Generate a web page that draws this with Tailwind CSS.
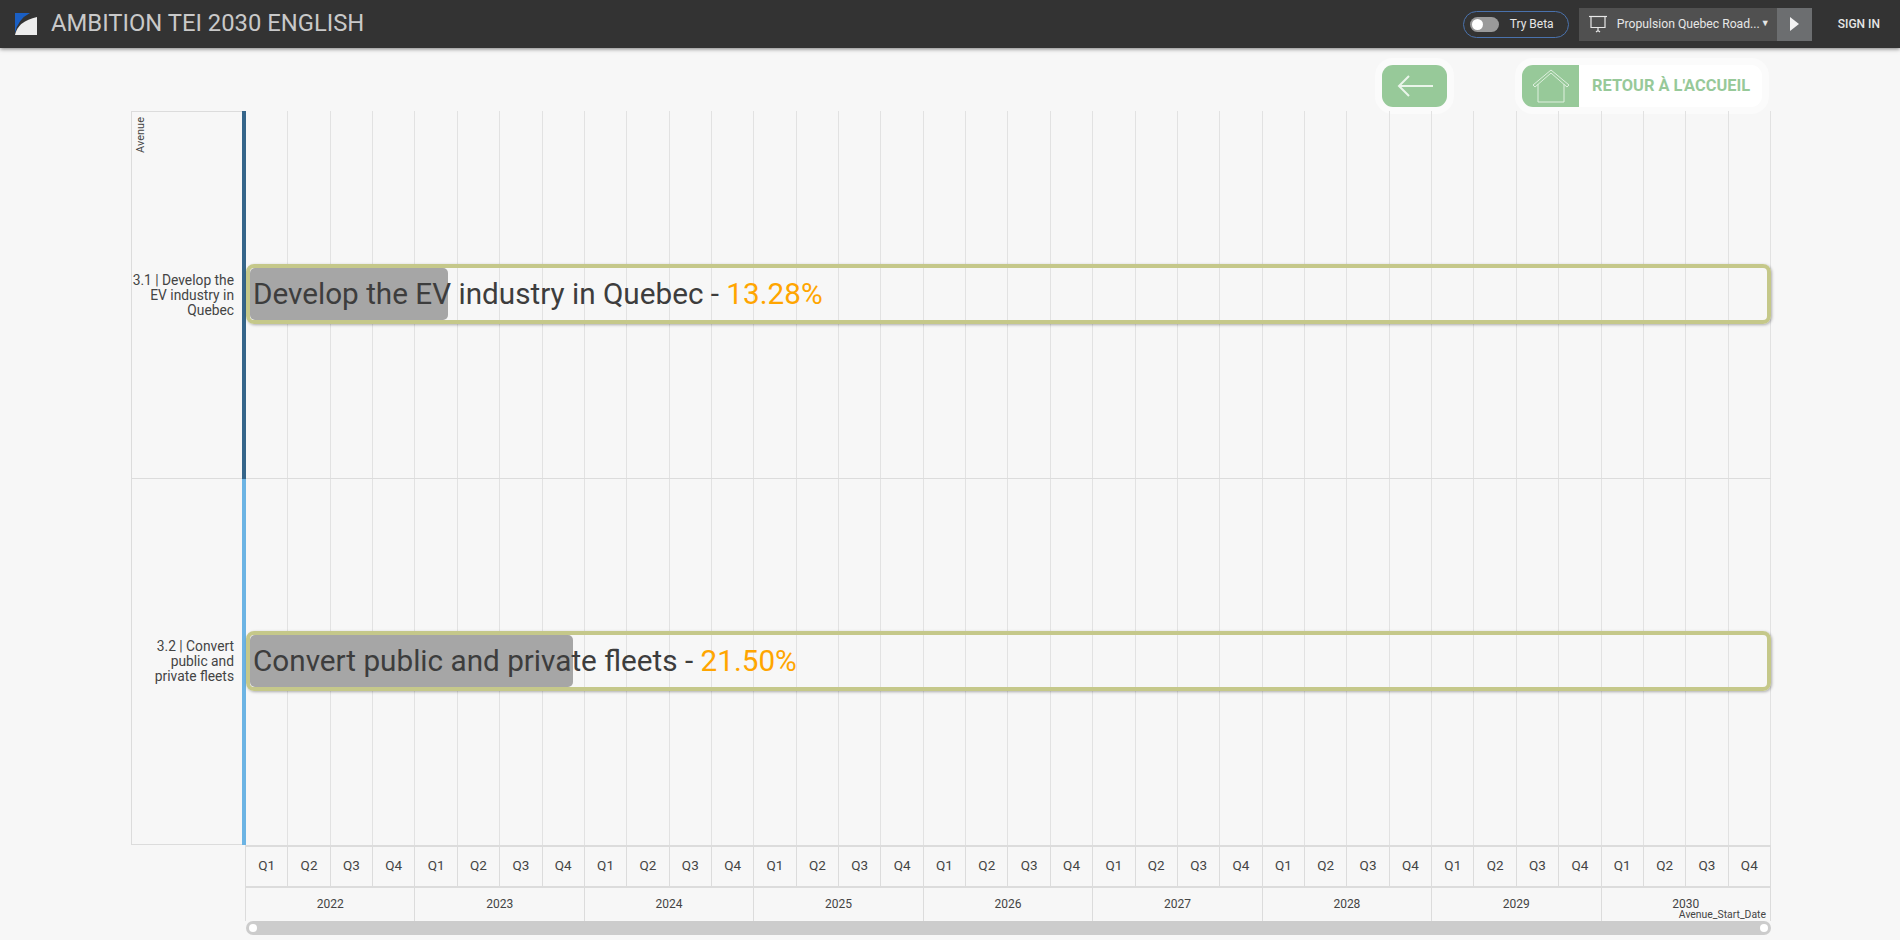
<!DOCTYPE html>
<html lang="en">

<head>
    <meta charset="UTF-8">
    <meta name="viewport" content="width=device-width, initial-scale=1.0">
    <title>AMBITION TEI 2030 ENGLISH</title>
    <script src="https://cdn.jsdelivr.net/npm/@tailwindcss/browser@4"></script>
</head>

<body class="h-screen overflow-hidden bg-[#f7f7f7] font-['Roboto',sans-serif] text-[#444]">

    <!-- Top bar -->
    <header class="relative z-10 flex h-12 items-center bg-[#333333] shadow-[0_1px_4px_rgba(0,0,0,0.5)]">
        <svg class="ml-[15px] h-[22px] w-[22px]" viewBox="0 0 22 22">
            <path d="M0 22Q3 8 22 4V22Z" fill="#ededed" />
            <path d="M0 0H15Q3 6 0 20Z" fill="#1a5fc4" />
        </svg>
        <h1 class="ml-[14px] text-[23.8px] text-[#c9c9c9]">AMBITION TEI 2030 ENGLISH</h1>

        <div class="ml-auto flex h-[27px] w-[106px] items-center rounded-full border border-[#4a72ad] pl-[6px]">
            <span class="flex h-[15px] w-[29px] items-center rounded-full bg-[#9a9a9a] pl-[2px]">
                <span class="h-[11px] w-[11px] rounded-full bg-white"></span>
            </span>
            <span class="ml-[11px] text-[12px] text-[#e6e6e6]">Try Beta</span>
        </div>

        <div class="ml-[10px] flex h-[33px] w-[233px] items-center bg-[#505050]">
            <svg class="ml-[9px] h-[20px] w-[20px]" viewBox="0 0 20 20" fill="none" stroke="#e8e8e8" stroke-width="1.2">
                <path d="M1 2.5H19" />
                <path d="M3 2.5V13.5H17V2.5" />
                <path d="M10 13.5V17M8 18L10 16.5L12 18" />
            </svg>
            <span class="ml-[9px] w-[144px] whitespace-nowrap text-[12.2px] text-[#e6e6e6]">Propulsion Quebec Road...</span>
            <span class="text-[9px] text-[#e6e6e6]">▼</span>
            <span class="ml-auto flex h-full w-[35px] items-center justify-center bg-[#6c6e70]">
                <svg class="h-[14px] w-[9px]" viewBox="0 0 9 14"><path d="M0 0L9 7L0 14Z" fill="#f2f2f2" /></svg>
            </span>
        </div>

        <span class="mr-[20px] ml-[26px] text-[12px] font-medium text-[#e6e6e6]">SIGN IN</span>
    </header>

    <main class="pl-[131px]">
        <!-- Navigation buttons -->
        <div class="flex w-[1631px] justify-end pt-[17px]">
            <button class="flex h-[42px] w-[65px] items-center justify-center rounded-[11px] bg-[#97c999] shadow-[0_0_0_7px_#fbfbfb]">
                <svg class="h-[22px] w-[36px]" viewBox="0 0 36 22" fill="none" stroke="#eaf5ea" stroke-width="2">
                    <path d="M36 11H2M12 1L2 11L12 21" />
                </svg>
            </button>
            <button class="ml-[75px] flex h-[42px] w-[240px] items-center overflow-hidden rounded-[11px] bg-white shadow-[0_0_0_7px_#fbfbfb]">
                <span class="flex h-full w-[57px] items-center justify-center bg-[#97c999]">
                    <svg class="h-[34px] w-[38px]" viewBox="0 0 38 34" fill="none" stroke="#dff0df" stroke-width="1">
                        <path d="M1 16L19 1L37 16L35 18L19 4L3 18Z" />
                        <path d="M6 15V33H32V15" />
                    </svg>
                </span>
                <span class="ml-[13px] whitespace-nowrap text-[16.4px] font-bold text-[#97c999]">RETOUR À L'ACCUEIL</span>
            </button>
        </div>

        <!-- Gantt rows -->
        <div class="mt-[4px] w-[1640px]">
            <div class="flex h-[368px]">
                <div class="relative flex w-[111px] items-center justify-end border-t border-b border-l border-[#dcdcdc] pr-[8px]">
                    <span class="absolute top-[5px] left-[3px] rotate-180 text-[11px] leading-none [writing-mode:vertical-rl]">Avenue</span>
                    <p class="w-[103px] text-right text-[13.8px] leading-[15px]">3.1 | Develop the EV industry in Quebec</p>
                </div>
                <div class="w-[4px] bg-[#35658a]"></div>
                <div class="relative flex flex-1 items-center border-b border-[#dcdcdc] pb-[2px]">
                    <div class="grid-lines absolute inset-0 grid grid-cols-36"></div>
                    <div class="relative h-[60px] w-full overflow-hidden rounded-[8px] border-4 border-[#c5c88a] pl-[3px] shadow-[1px_1px_3px_rgba(0,0,0,0.3)]">
                        <div class="absolute top-0 bottom-0 left-0 w-[198px] rounded-[5px] bg-[#a6a6a6]"></div>
                        <p class="relative text-[29.7px] leading-[52px] text-[#3d3d3d]">Develop the EV industry in Quebec - <span class="text-[#ffa500]">13.28%</span></p>
                    </div>
                </div>
            </div>
            <div class="flex h-[366px]">
                <div class="flex w-[111px] items-center justify-end border-b border-l border-[#dcdcdc] pr-[8px]">
                    <p class="w-[103px] text-right text-[13.8px] leading-[15px]">3.2 | Convert public and private fleets</p>
                </div>
                <div class="w-[4px] bg-[#6cb4e4]"></div>
                <div class="relative flex flex-1 items-center pb-[2px]">
                    <div class="grid-lines absolute inset-0 grid grid-cols-36"></div>
                    <div class="relative h-[60px] w-full overflow-hidden rounded-[8px] border-4 border-[#c5c88a] pl-[3px] shadow-[1px_1px_3px_rgba(0,0,0,0.3)]">
                        <div class="absolute top-0 bottom-0 left-0 w-[323px] rounded-[5px] bg-[#a6a6a6]"></div>
                        <p class="relative text-[29.7px] leading-[52px] text-[#3d3d3d]">Convert public and private fleets - <span class="text-[#ffa500]">21.50%</span></p>
                    </div>
                </div>
            </div>
        </div>

        <!-- Time axis -->
        <div class="ml-[114px] w-[1526px]">
            <div id="quarters" class="grid h-[41px] grid-cols-36 border-t-2 border-l border-[#dcdcdc]"></div>
            <div id="years" class="relative grid h-[35px] grid-cols-9 border-t-2 border-l border-[#dcdcdc]">
                <span class="absolute right-[5px] bottom-[1px] text-[10.4px] leading-none">Avenue_Start_Date</span>
            </div>
            <div class="ml-px flex h-[14px] items-center justify-between rounded-[7px] bg-[#cccccc] px-[3px]">
                <span class="h-[8px] w-[8px] rounded-full bg-white"></span>
                <span class="h-[8px] w-[8px] rounded-full bg-white"></span>
            </div>
        </div>
    </main>

    <script>
        const quarters = document.getElementById("quarters");
        const years = document.getElementById("years");

        for (let year = 2022; year <= 2030; year++) {
            ["Q1", "Q2", "Q3", "Q4"].forEach(q => {
                quarters.innerHTML += `<div class="flex items-center justify-center border-r border-[#dcdcdc] pb-[2px] text-[13.5px]">${q}</div>`;
            });
            years.innerHTML += `<div class="flex items-center justify-center border-r border-[#dcdcdc] pb-[2px] text-[12px]">${year}</div>`;
        }

        document.querySelectorAll(".grid-lines").forEach(el => {
            for (let i = 0; i < 36; i++) {
                el.innerHTML += `<div class="border-r border-[#e2e2e2]"></div>`;
            }
        });
    </script>

</body>

</html>
